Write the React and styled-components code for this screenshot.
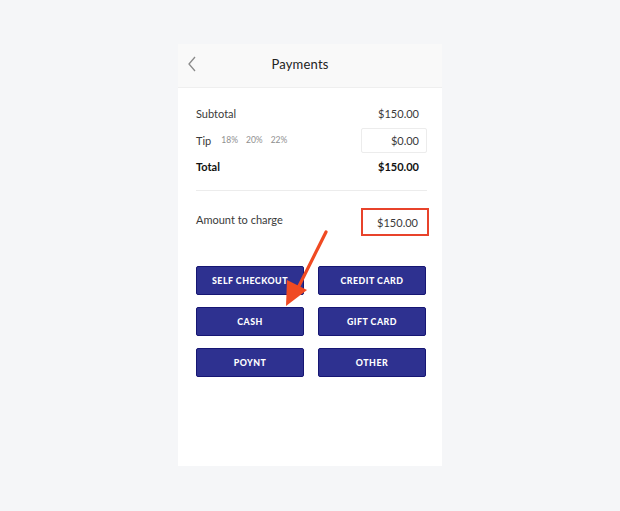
import React from "react";
import styled, { createGlobalStyle } from "styled-components";

const Global = createGlobalStyle`
  html, body { margin: 0; padding: 0; background: #f5f6f8; }
  body { font-family: Lato, "Noto Sans", sans-serif; }
`;

const Page = styled.div`
  width: 620px;
  height: 511px;
  display: flex;
  justify-content: center;
  padding-top: 44px;
  box-sizing: border-box;
`;

const Panel = styled.div`
  position: relative;
  width: 264px;
  height: 422px;
  background: #ffffff;
  display: flex;
  flex-direction: column;
`;

const Header = styled.div`
  height: 44px;
  background: #f9f9f9;
  border-bottom: 1px solid #efefef;
  box-sizing: border-box;
  display: flex;
  align-items: center;
  padding-bottom: 4px;
`;

const Back = styled.button`
  border: none;
  background: none;
  padding: 0;
  margin-left: 9px;
  width: 12px;
  height: 20px;
  display: flex;
  align-items: center;
`;

const Title = styled.div`
  flex: 1;
  text-align: center;
  padding-right: 41px;
  font-size: 13px;
  color: #222;
  letter-spacing: 0.2px;
`;

const Body = styled.div`
  padding: 14px 15px 0 18px;
  display: flex;
  flex-direction: column;
`;

const Row = styled.div`
  display: flex;
  justify-content: space-between;
  align-items: ${(p) => (p.top ? "flex-start" : "center")};
  height: ${(p) => p.h || 26}px;
  font-size: 11px;
  color: ${(p) => (p.bold ? "#111" : "#3a3a3a")};
  font-weight: ${(p) => (p.bold ? 700 : 400)};
`;

const Value = styled.span`
  padding-right: 8px;
`;

const Left = styled.div`
  display: flex;
  align-items: center;
`;

const ChargeLabel = styled.span`
  margin-top: 5px;
`;

const Pct = styled.span`
  font-size: 8.5px;
  color: #8f8f8f;
  margin-left: ${(p) => (p.first ? 10 : 8)}px;
`;

const Box = styled.div`
  width: ${(p) => p.w}px;
  height: ${(p) => p.h}px;
  box-sizing: border-box;
  border: ${(p) => (p.red ? "2px solid #e8432b" : "1px solid #ececec")};
  border-radius: ${(p) => (p.red ? 0 : 2)}px;
  margin-right: ${(p) => (p.red ? -2 : 0)}px;
  display: flex;
  align-items: center;
  justify-content: flex-end;
  padding-right: ${(p) => (p.red ? 9 : 7)}px;
  font-size: 11px;
  color: #3a3a3a;
`;

const Divider = styled.div`
  height: 1px;
  background: #ececec;
  margin: 14px 0 17px 0;
`;

const Grid = styled.div`
  display: grid;
  grid-template-columns: 108px 108px;
  column-gap: 14px;
  row-gap: 12px;
  margin-top: 30px;
`;

const PayButton = styled.button`
  height: 29px;
  background: #2e3190;
  border: 1px solid #161673;
  border-radius: 2px;
  color: #ffffff;
  font-family: Lato, "Noto Sans", sans-serif;
  font-weight: 900;
  font-size: 8.8px;
  letter-spacing: 0.5px;
  padding: 0;
`;

const ArrowSvg = styled.svg`
  position: absolute;
  left: 100px;
  top: 184px;
  pointer-events: none;
`;

export default function App() {
  const methods = ["SELF CHECKOUT", "CREDIT CARD", "CASH", "GIFT CARD", "POYNT", "OTHER"];
  return (
    <>
      <Global />
      <Page>
        <Panel>
          <Header>
            <Back aria-label="back">
              <svg width="10" height="18" viewBox="0 0 10 18">
                <path d="M8 2 L2 9 L8 16" fill="none" stroke="#8a8a8a" strokeWidth="1.3" />
              </svg>
            </Back>
            <Title>Payments</Title>
          </Header>
          <Body>
            <Row h={22}>
              <span>Subtotal</span>
              <Value>$150.00</Value>
            </Row>
            <Row h={32}>
              <Left>
                <span>Tip</span>
                <Pct first>18%</Pct>
                <Pct>20%</Pct>
                <Pct>22%</Pct>
              </Left>
              <Box w={66} h={25}>$0.00</Box>
            </Row>
            <Row bold h={20}>
              <span>Total</span>
              <Value>$150.00</Value>
            </Row>
            <Divider />
            <Row top h={28}>
              <ChargeLabel>Amount to charge</ChargeLabel>
              <Box red w={68} h={28}>$150.00</Box>
            </Row>
            <Grid>
              {methods.map((m) => (
                <PayButton key={m}>{m}</PayButton>
              ))}
            </Grid>
          </Body>
          <ArrowSvg width="60" height="90" viewBox="0 0 60 90">
            <line x1="48" y1="4" x2="19" y2="62" stroke="#f04a22" strokeWidth="3.2" strokeLinecap="round" />
            <polygon points="8,78 9,52 29,62" fill="#f04a22" />
          </ArrowSvg>
        </Panel>
      </Page>
    </>
  );
}
